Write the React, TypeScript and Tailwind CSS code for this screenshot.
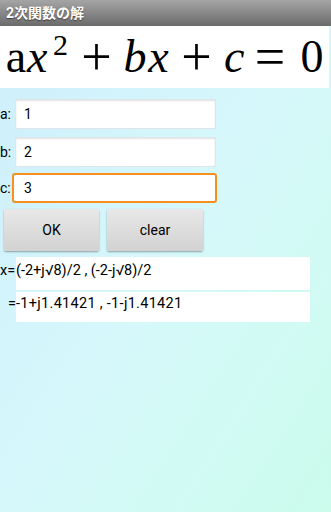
import { useState } from "react";

const glyph = "inline-block text-center";

export default function App() {
  const [a, setA] = useState("1");
  const [b, setB] = useState("2");
  const [c, setC] = useState("3");

  const inputCls =
    "w-[201px] h-[30px] bg-white px-2 text-[14px] text-black outline-none border border-[#dfe6ea] shadow-[inset_0_1px_2px_rgba(0,0,0,0.12)]";

  return (
    <div
      className="w-[331px] h-[512px] overflow-hidden flex flex-col bg-gradient-to-br from-[#cdeefc] via-[#d6f8fb] to-[#cbfcec] text-black"
      style={{ fontFamily: "Roboto, 'Noto Sans CJK JP', sans-serif" }}
    >
      {/* title bar */}
      <div className="h-[26px] shrink-0 flex items-center px-[6px] bg-gradient-to-b from-[#a5a5a5] to-[#6b6b6b]">
        <span className="text-white text-[14px] font-bold [text-shadow:0_1px_1px_rgba(0,0,0,0.5)]">
          2次関数の解
        </span>
      </div>

      {/* formula */}
      <div
        className="w-[329px] h-[62px] bg-white flex items-center pl-[5px] text-[46px] leading-none whitespace-nowrap"
        style={{ fontFamily: "'Liberation Serif', serif" }}
      >
        <span className={`${glyph} w-[22px]`}>a</span>
        <i className={`${glyph} w-[20px]`}>x</i>
        <span className={`${glyph} w-[27px] text-[30px] relative -top-[12px]`}>2</span>
        <span className={`${glyph} w-[45px] text-[54px]`}>+</span>
        <i className={`${glyph} w-[26px] ml-[3px]`}>b</i>
        <i className={`${glyph} w-[21px]`}>x</i>
        <span className={`${glyph} w-[55px] text-[54px]`}>+</span>
        <i className={`${glyph} w-[19px]`}>c</i>
        <span className={`${glyph} w-[54px] text-[54px]`}>=</span>
        <span className={`${glyph} w-[30px]`}>0</span>
      </div>

      {/* inputs */}
      <div className="mt-[11px] flex flex-col">
        <div className="flex items-center">
          <span className="w-[15px] text-[14px]">a:</span>
          <input className={inputCls} value={a} onChange={(e) => setA(e.target.value)} />
        </div>
        <div className="mt-[8px] flex items-center">
          <span className="w-[15px] text-[14px]">b:</span>
          <input className={inputCls} value={b} onChange={(e) => setB(e.target.value)} />
        </div>
        <div className="mt-[6px] flex items-center">
          <span className="w-[12px] text-[14px]">c:</span>
          <input
            className="w-[205px] h-[30px] bg-white pl-[10px] text-[14px] text-black outline-none border-2 border-[#f7901e] rounded-[3px]"
            value={c}
            onChange={(e) => setC(e.target.value)}
          />
        </div>
      </div>

      {/* buttons */}
      <div className="mt-[6px] ml-[4px] flex gap-[8px]">
        <button className="w-[95px] h-[42px] rounded-[2px] bg-gradient-to-b from-[#e8e8e8] to-[#d2d2d2] text-[14px] shadow-[0_1px_2px_rgba(0,0,0,0.35)]">
          OK
        </button>
        <button className="w-[96px] h-[42px] rounded-[2px] bg-gradient-to-b from-[#e8e8e8] to-[#d2d2d2] text-[14px] shadow-[0_1px_2px_rgba(0,0,0,0.35)]">
          clear
        </button>
      </div>

      {/* results */}
      <div className="mt-[6px] flex flex-col gap-[2px] text-[14.5px]">
        <div className="flex">
          <span className="w-[16px] pt-[3px]">x=</span>
          <div className="w-[294px] h-[33px] bg-white pt-[3px]">(-2+j√8)/2 , (-2-j√8)/2</div>
        </div>
        <div className="flex">
          <span className="w-[16px] pt-[1px] text-right">=</span>
          <div className="w-[294px] h-[30px] bg-white pt-[1px] tracking-[0.3px]">-1+j1.41421 , -1-j1.41421</div>
        </div>
      </div>
    </div>
  );
}
